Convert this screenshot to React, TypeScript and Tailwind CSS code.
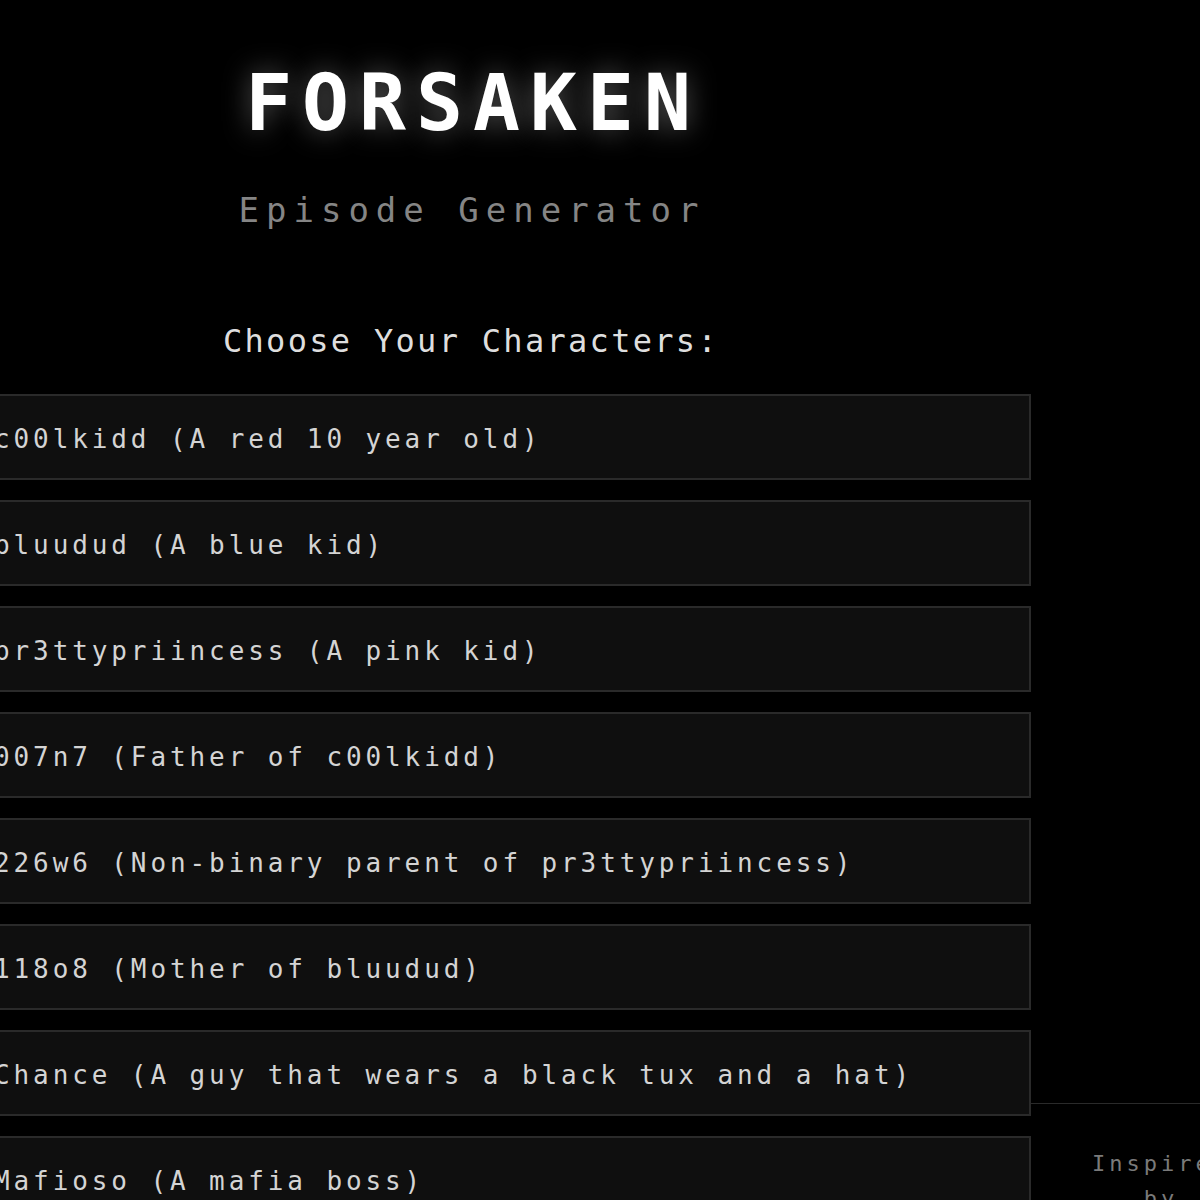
import React, { useState } from 'react';

const characters = [
  'c00lkidd (A red 10 year old)',
  'bluudud (A blue kid)',
  'pr3ttypriincess (A pink kid)',
  '007n7 (Father of c00lkidd)',
  '226w6 (Non-binary parent of pr3ttypriincess)',
  '118o8 (Mother of bluudud)',
  'Chance (A guy that wears a black tux and a hat)',
  'Mafioso (A mafia boss)',
  'Two Time (A cultist)',
  'John Doe (A corrupted hacker)',
];

function CharacterCard({ label }: { label: string }) {
  const [checked, setChecked] = useState(false);
  return (
    <label className="flex items-center h-[86px] pt-[4px] pl-6 bg-[#0f0f0f] border-2 border-[#2a2a2a] cursor-pointer">
      <input
        type="checkbox"
        checked={checked}
        onChange={() => setChecked(!checked)}
        className="w-5 h-5 shrink-0 mr-[39px] accent-white"
      />
      <span className="text-[26px] leading-normal tracking-[3.9px] text-[#d4d4d4] whitespace-nowrap">
        {label}
      </span>
    </label>
  );
}

export default function App() {
  return (
    <div
      className="flex justify-center w-full min-h-screen overflow-x-hidden bg-black"
      style={{ fontFamily: '"DejaVu Sans Mono", "Liberation Mono", monospace' }}
    >
      <main className="w-[1122px] shrink-0 flex flex-col items-center">
        <h1 className="mt-16 ml-[6px] text-[78px] leading-none font-bold tracking-[10px] text-white [text-shadow:0_0_28px_rgba(255,255,255,0.35)]">
          FORSAKEN
        </h1>
        <p className="mt-[51px] ml-[4px] text-[34px] leading-none tracking-[7px] text-[#858585]">
          Episode Generator
        </p>
        <h2 className="mt-[98px] ml-[2px] text-[32px] leading-none tracking-[2.3px] text-[#dedede]">
          Choose Your Characters:
        </h2>
        <div className="mt-[37px] w-full flex flex-col gap-5">
          {characters.map((c) => (
            <CharacterCard key={c} label={c} />
          ))}
        </div>
        <button className="mt-10 mb-16 px-10 py-5 border-2 border-[#2a2a2a] bg-[#0f0f0f] text-[26px] tracking-[3.9px] text-white">
          Generate Episode
        </button>
      </main>
      <footer className="w-[260px] shrink-0 self-start mt-[1103px] border-t border-[#2a2a2a] px-12 pt-[42px] pb-10 text-center">
        <p className="text-[22px] leading-[1.6] tracking-[4px] text-[#7a7a7a]">Inspired by</p>
      </footer>
    </div>
  );
}
